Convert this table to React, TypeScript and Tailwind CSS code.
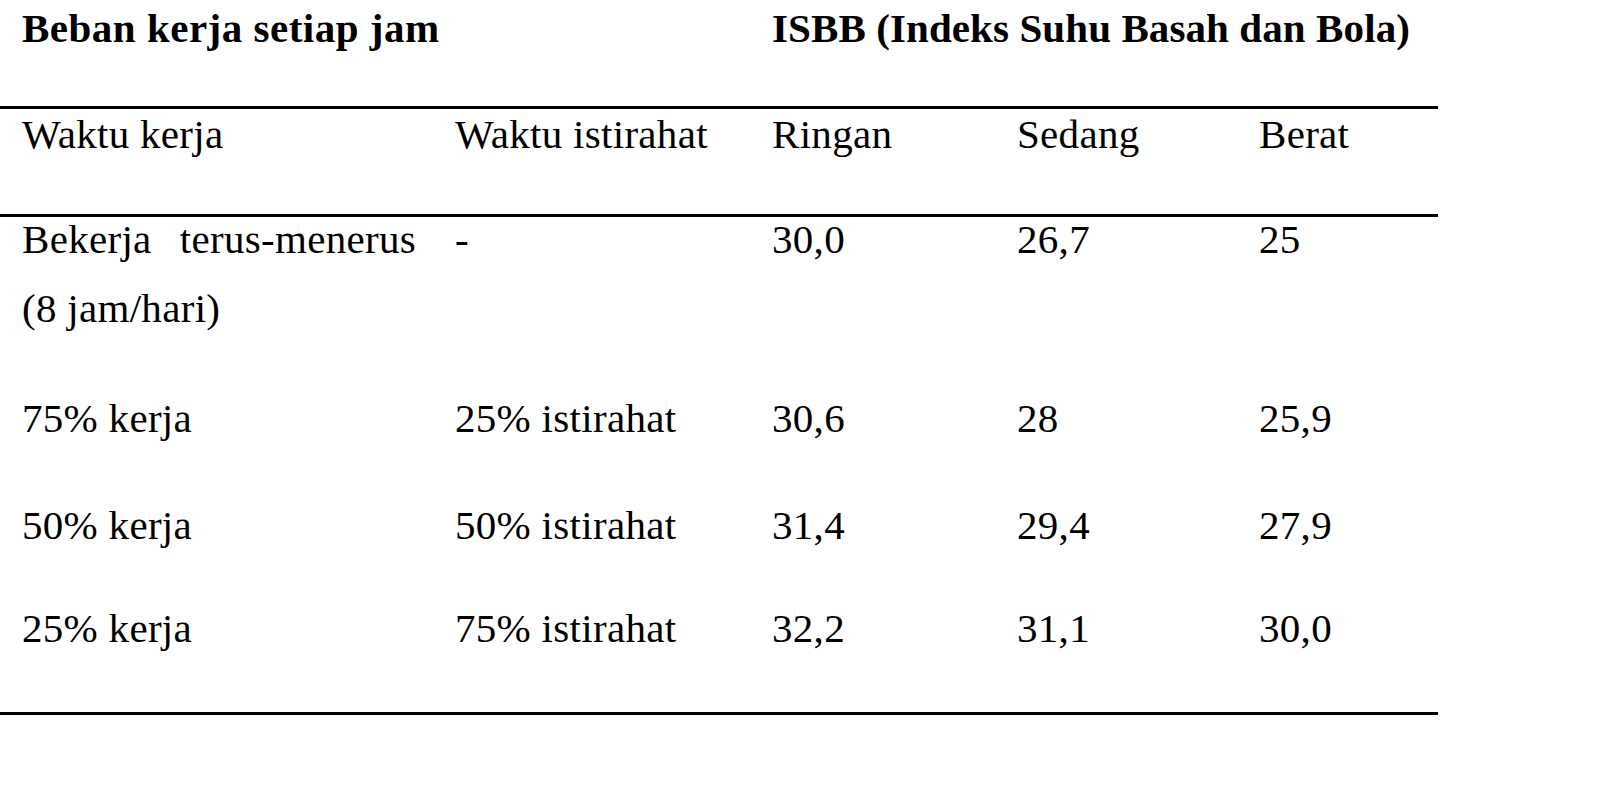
import React from 'react';

const cols = 'grid grid-cols-[455px_317px_245px_242px_179px]';

const rows = [
  { work: '75% kerja', rest: '25% istirahat', vals: ['30,6', '28', '25,9'], h: 'h-[107px]' },
  { work: '50% kerja', rest: '50% istirahat', vals: ['31,4', '29,4', '27,9'], h: 'h-[103px]' },
  { work: '25% kerja', rest: '75% istirahat', vals: ['32,2', '31,1', '30,0'], h: 'h-[104px]' },
];

function Rule() {
  return <div className="h-[3px] w-[1438px] bg-black" />;
}

export default function App() {
  return (
    <div
      className="min-h-screen w-[1600px] bg-white text-black text-[41px] leading-[41px] tracking-[0.3px]"
      style={{ fontFamily: '"Liberation Serif", "Times New Roman", serif' }}
    >
      {/* title row */}
      <div className={`${cols} h-[106px] pt-[8px] font-bold`}>
        <div className="pl-[22px] tracking-[0.5px] whitespace-nowrap">Beban kerja setiap jam</div>
        <div />
        <div className="col-span-3 whitespace-nowrap tracking-[0.1px]">ISBB (Indeks Suhu Basah dan Bola)</div>
      </div>
      <Rule />

      {/* column heads */}
      <div className={`${cols} h-[105px] pt-[5px]`}>
        <div className="pl-[22px]">Waktu kerja</div>
        <div>Waktu istirahat</div>
        <div>Ringan</div>
        <div>Sedang</div>
        <div>Berat</div>
      </div>
      <Rule />

      {/* first row, two lines */}
      <div className={`${cols} h-[181px] pt-[2px]`}>
        <div className="pl-[22px]">
          <div className="flex w-[394px] justify-between">
            <span>Bekerja</span>
            <span>terus-menerus</span>
          </div>
          <div className="mt-[28px]">(8 jam/hari)</div>
        </div>
        <div>-</div>
        <div>30,0</div>
        <div>26,7</div>
        <div>25</div>
      </div>

      {rows.map((r) => (
        <div key={r.work} className={`${cols} ${r.h}`}>
          <div className="pl-[22px]">{r.work}</div>
          <div>{r.rest}</div>
          {r.vals.map((v, i) => (
            <div key={i}>{v}</div>
          ))}
        </div>
      ))}
      <Rule />
    </div>
  );
}
